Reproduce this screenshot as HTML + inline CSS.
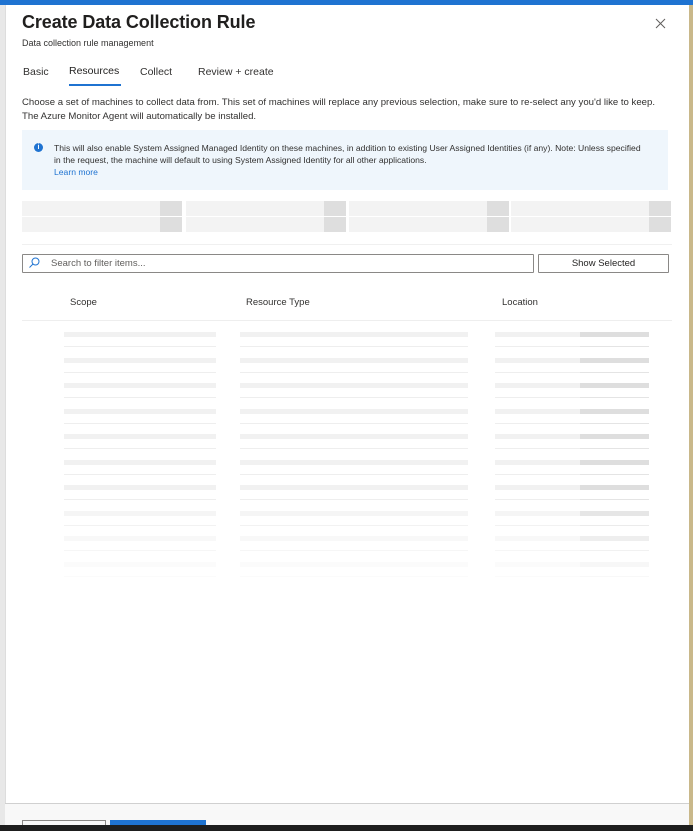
<!DOCTYPE html>
<html><head><style>
*{margin:0;padding:0;box-sizing:border-box}
body{width:693px;height:831px;overflow:hidden;background:#e8e8e8;font-family:"Liberation Sans",sans-serif;position:relative;color:#323130}
.top{position:absolute;left:0;top:0;width:693px;height:5px;background:#1f73d1}
.bg{position:absolute;right:0;top:5px;width:5px;height:826px;background:#c9b88a}
.panel{position:absolute;left:5px;top:5px;width:684px;height:820px;background:#fff;border-left:1px solid #ddd}
.abs{position:absolute}
.dark{position:absolute;left:0;top:825px;width:693px;height:6px;background:#1e1e1e}
</style></head><body>
<div class="top"></div><div class="bg"></div>
<div class="panel"></div>
<div class="abs" style="left:22px;top:12px;font-size:18px;font-weight:600;color:#201f1e;letter-spacing:-0.1px">Create Data Collection Rule</div>
<div class="abs" style="left:22px;top:38px;font-size:9px;color:#323130">Data collection rule management</div>
<svg class="abs" style="left:655px;top:18px" width="11" height="11"><path d="M1 1L10 10M10 1L1 10" stroke="#605e5c" stroke-width="1"/></svg>
<div class="abs" style="left:23px;top:66px;font-size:10.5px">Basic</div>
<div class="abs" style="left:69px;top:65px;font-size:10.5px;color:#201f1e">Resources</div>
<div class="abs" style="left:69px;top:84px;width:52px;height:2px;background:#1f73d1"></div>
<div class="abs" style="left:140px;top:66px;font-size:10.5px">Collect</div>
<div class="abs" style="left:198px;top:66px;font-size:10.5px">Review + create</div>
<div class="abs" style="left:22px;top:96px;width:650px;font-size:9.6px;line-height:14px">Choose a set of machines to collect data from. This set of machines will replace any previous selection, make sure to re-select any you'd like to keep. The Azure Monitor Agent will automatically be installed.</div>
<div class="abs" style="left:22px;top:130px;width:646px;height:60px;background:#eff6fc"></div>
<div class="abs" style="left:34px;top:143px;width:9px;height:9px;border-radius:50%;background:#1f73d1;color:#fff;font-size:7px;text-align:center;line-height:9px;font-weight:bold">i</div>
<div class="abs" style="left:54px;top:142px;width:590px;font-size:8.6px;line-height:12px">This will also enable System Assigned Managed Identity on these machines, in addition to existing User Assigned Identities (if any). Note: Unless specified in the request, the machine will default to using System Assigned Identity for all other applications.<br><span style="color:#1f73d1">Learn more</span></div>
<div id="sk"></div>
<div class="abs" style="left:22px;top:244px;width:650px;height:1px;background:#f0f0f0"></div>
<div class="abs" style="left:22px;top:254px;width:512px;height:19px;border:1px solid #8a8886;border-radius:1px"></div>
<svg class="abs" style="left:28px;top:257px" width="12" height="12"><circle cx="7.5" cy="4.5" r="3.5" fill="none" stroke="#1f73d1" stroke-width="1"/><path d="M5 7L1.5 10.5" stroke="#1f73d1" stroke-width="1"/></svg>
<div class="abs" style="left:51px;top:258px;font-size:9.5px;color:#605e5c">Search to filter items...</div>
<div class="abs" style="left:538px;top:254px;width:131px;height:19px;border:1px solid #8a8886;border-radius:1px;font-size:9.5px;text-align:center;line-height:17px;color:#201f1e">Show Selected</div>
<div class="abs" style="left:70px;top:297px;font-size:9.5px">Scope</div>
<div class="abs" style="left:246px;top:297px;font-size:9.5px">Resource Type</div>
<div class="abs" style="left:502px;top:297px;font-size:9.5px">Location</div>
<div class="abs" style="left:22px;top:320px;width:650px;height:1px;background:#eee"></div>
<div id="rows"></div>
<div class="abs" style="left:5px;top:803px;width:684px;height:1px;background:#d0d0d0"></div>
<div class="abs" style="left:5px;top:804px;width:684px;height:21px;background:#f8f8f8"></div>
<div class="abs" style="left:22px;top:820px;width:84px;height:6px;border:1px solid #8a8886;border-bottom:none"></div>
<div class="abs" style="left:110px;top:820px;width:96px;height:6px;background:#1f73d1"></div>
<div class="dark"></div>
<script>
var s='';
[22,186,349,511].forEach(function(x){[201,217].forEach(function(y){
s+='<div class="abs" style="left:'+x+'px;top:'+y+'px;width:138px;height:15px;background:#f3f3f3"></div>';
s+='<div class="abs" style="left:'+(x+138)+'px;top:'+y+'px;width:22px;height:15px;background:#dedede"></div>';});});
document.getElementById('sk').innerHTML=s;
var r='';
for(var i=0;i<10;i++){var y=332+i*25.5,o=Math.max(0.1,1-Math.max(0,i-6)*0.25);
[[64,152],[240,228],[495,85]].forEach(function(c){
r+='<div class="abs" style="opacity:'+o+';left:'+c[0]+'px;top:'+y+'px;width:'+c[1]+'px;height:5px;background:#f1f1f1"></div>';
r+='<div class="abs" style="opacity:'+o+';left:'+c[0]+'px;top:'+(y+14)+'px;width:'+c[1]+'px;height:1px;background:#eee"></div>';});
r+='<div class="abs" style="opacity:'+o+';left:580px;top:'+y+'px;width:69px;height:5px;background:#dedede"></div>';
r+='<div class="abs" style="opacity:'+o+';left:580px;top:'+(y+14)+'px;width:69px;height:1px;background:#e4e4e4"></div>';}
document.getElementById('rows').innerHTML=r;
</script>
</body></html>
